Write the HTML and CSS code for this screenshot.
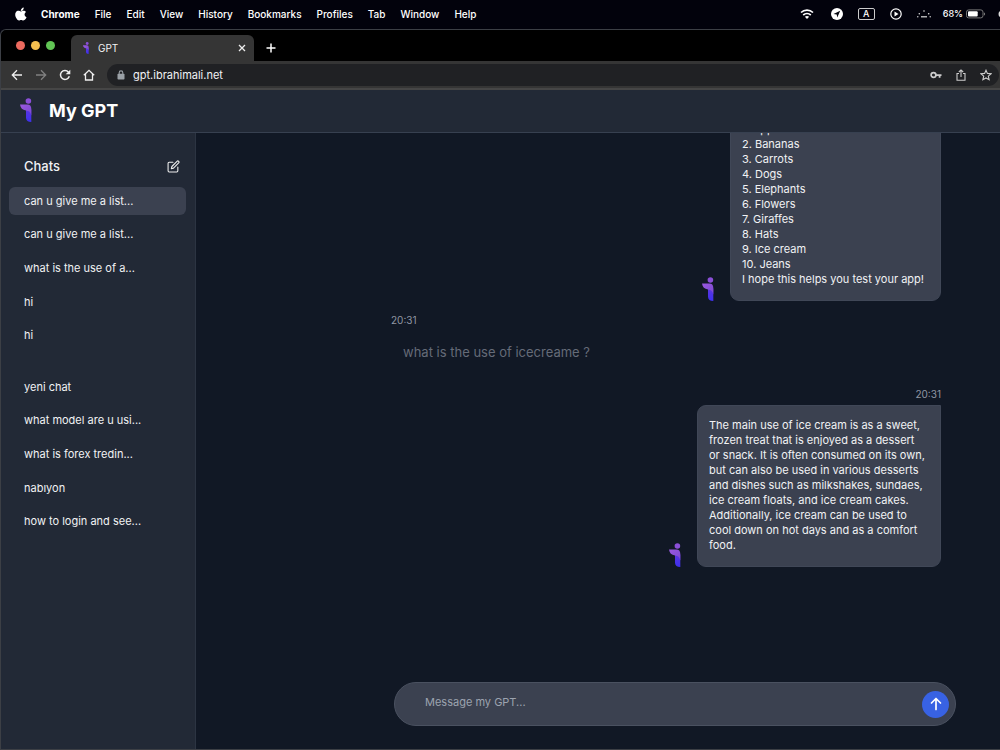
FILE: index.html
```html
<!DOCTYPE html>
<html lang="en">
<head>
    <meta charset="UTF-8">
    <meta name="viewport" content="width=device-width, initial-scale=1.0">
    <title>GPT</title>
    <link rel="stylesheet" href="styles.css">
</head>
<body>

<!-- Shared logo -->
<svg class="defs" width="0" height="0" aria-hidden="true">
    <defs>
        <linearGradient id="wing" x1="0" y1="0" x2="1" y2="1">
            <stop offset="0" stop-color="#9b59e0"/>
            <stop offset="1" stop-color="#7a48d0"/>
        </linearGradient>
        <linearGradient id="stem" x1="0" y1="0" x2="0" y2="1">
            <stop offset="0" stop-color="#5b35e0"/>
            <stop offset="1" stop-color="#3d30ee"/>
        </linearGradient>
    </defs>
    <symbol id="logo" viewBox="0 0 12 24">
        <circle cx="8.400" cy="3" r="2.800" fill="#8b4fd8"/>
        <path d="M6 11.500h5.300V24C8 24 6 22.500 6 19.500z" fill="url(#stem)"/>
        <path d="M0 6.500h7.300c2.600 0 4 1.500 4 4.200v6.800c-.6-3.200-2.300-4.800-5.300-5C2.500 12 .4 10 0 6.500z" fill="url(#wing)"/>
    </symbol>
</svg>

<div class="menubar">
    <svg class="apple" viewBox="0 0 24 24" fill="#fff"><path d="M16.700 1c.2 1.600-.4 3-1.300 4-.9 1.100-2.300 1.900-3.700 1.800-.2-1.500.5-3 1.300-4C13.900 1.800 15.400 1.100 16.700 1zM21.500 17.400c-.6 1.400-.9 2-1.700 3.200-1.100 1.600-2.500 2.500-4 2.500-1.400 0-1.900-.9-3.600-.9s-2.300.9-3.700.9c-1.500 0-2.800-1.300-3.900-2.900C1.700 16 1.300 11.200 3.200 8.800c1.100-1.500 2.700-2.300 4.300-2.300 1.700 0 2.900 1 4.500 1 1.500 0 2.400-1 4.500-1 1.500 0 3.100.8 4.200 2.200-3.700 2.100-3.200 7.300.8 8.700z"/></svg>
    <nav class="menus">
        <b>Chrome</b>
        <span>File</span>
        <span>Edit</span>
        <span>View</span>
        <span>History</span>
        <span>Bookmarks</span>
        <span>Profiles</span>
        <span>Tab</span>
        <span>Window</span>
        <span>Help</span>
    </nav>
    <div class="status">
        <svg class="wifi" width="14" height="12" viewBox="0 0 14 12" fill="none" stroke="#fff" stroke-width="1.700"><path d="M1 4.500c3.300-3.200 8.700-3.200 12 0M3.200 7c2.200-2 5.400-2 7.600 0"/><path d="M4.900 8.700c1.200-1 3-1 4.200 0L7 11z" fill="#fff" stroke="none"/></svg>
        <svg width="12" height="12" viewBox="0 0 12 12"><circle cx="6" cy="6" r="6" fill="#fff"/><path d="M9.200 2.800L2.500 5.900l3.200.5.600 3.200z" fill="#05060f"/></svg>
        <span class="key">A</span>
        <svg width="12" height="12" viewBox="0 0 12 12"><circle cx="6" cy="6" r="5.200" fill="none" stroke="#fff" stroke-width="1.200"/><path d="M4.500 3.600v4.800L8.500 6z" fill="#fff"/></svg>
        <svg width="14" height="8" viewBox="0 0 14 8" fill="#ddd"><circle cx="2.300" cy="3.800" r=".8"/><circle cx="7" cy="1" r=".8"/><circle cx="11.700" cy="3.800" r=".8"/><circle cx=".8" cy="6.800" r=".7"/><circle cx="13.200" cy="6.800" r=".7"/><path d="M4 6.200h6v1.200H4z"/></svg>
        <div class="battery">
            <span>68%</span>
            <svg width="20" height="10" viewBox="0 0 20 10"><rect x=".5" y=".9" width="16.500" height="8" rx="2.200" fill="none" stroke="#777"/><rect x="2" y="2.300" width="9.700" height="5.200" rx="1" fill="#fff"/><path d="M18 3.500c1.500.4 1.500 2.600 0 3z" fill="#777"/></svg>
        </div>
    </div>
    <svg width="2" height="8" viewBox="0 0 2 8"><circle cx="4" cy="4" r="3.500" fill="#ddd"/></svg>
</div>

<div class="window">
    <div class="tabstrip">
        <div class="lights"><i class="red"></i><i class="yellow"></i><i class="green"></i></div>
        <div class="tab">
            <svg class="favicon"><use href="#logo"/></svg>
            <span>GPT</span>
            <button type="button" aria-label="Close tab"><svg width="8" height="8" viewBox="0 0 8 8" stroke="#eee" stroke-width="1.300"><path d="M1 1l6 6M7 1L1 7"/></svg></button>
        </div>
        <button type="button" class="new-tab" aria-label="New tab"><svg width="10" height="10" viewBox="0 0 10 10" stroke="#fff" stroke-width="1.500"><path d="M5 .5v9M.5 5h9"/></svg></button>
    </div>

    <div class="toolbar">
        <button type="button" aria-label="Back"><svg width="12" height="12" viewBox="0 0 12 12" fill="none" stroke="#eee" stroke-width="1.300"><path d="M11 6H1.500M6 1.300L1.300 6 6 10.700"/></svg></button>
        <button type="button" aria-label="Forward"><svg width="12" height="12" viewBox="0 0 12 12" fill="none" stroke="#808080" stroke-width="1.300"><path d="M1 6h9.500M6 1.300L10.700 6 6 10.700"/></svg></button>
        <button type="button" aria-label="Reload"><svg width="12" height="12" viewBox="0 0 12 12" fill="none" stroke="#eee" stroke-width="1.500"><path d="M10.300 7.300A4.500 4.500 0 1 1 9.400 3"/><path d="M11.300.7v4.600H6.700z" fill="#eee" stroke="none"/></svg></button>
        <button type="button" aria-label="Home"><svg width="12" height="12" viewBox="0 0 12 12" fill="none" stroke="#eee" stroke-width="1.300"><path d="M.8 6.300L6 1.300l5.200 5M2.500 5v6h7V5"/></svg></button>
        <div class="address">
            <svg width="8" height="10" viewBox="0 0 8 10"><rect x=".5" y="3.800" width="7" height="5.700" rx=".8" fill="#9aa0a6"/><path d="M2.200 4V2.700a1.800 1.800 0 0 1 3.600 0V4" fill="none" stroke="#9aa0a6" stroke-width="1.100"/></svg>
            <input type="text" aria-label="Address" value="gpt.ibrahimali.net">
            <svg width="12" height="8" viewBox="0 0 12 8"><circle cx="3.500" cy="4" r="2.400" fill="none" stroke="#ccc" stroke-width="1.700"/><path d="M6 3.200h5.500v1.800h-1v1.700H8.700V5H6z" fill="#ccc"/></svg>
            <svg width="10" height="12" viewBox="0 0 10 12" fill="none" stroke="#ccc" stroke-width="1.100"><path d="M3 4.500H1v6.700h8V4.500H7M5 8V1M2.800 3L5 .9 7.200 3"/></svg>
            <svg width="12" height="12" viewBox="0 0 12 12" fill="none" stroke="#ccc" stroke-width="1.100"><path d="M6 1.200l1.400 3.200 3.600.4-2.700 2.400.8 3.500L6 8.900l-3.100 1.800.8-3.500L1 4.800l3.600-.4z"/></svg>
        </div>
    </div>

    <header class="app-header">
        <svg class="logo"><use href="#logo"/></svg>
        <h1>My GPT</h1>
    </header>

    <div class="app">
        <aside class="sidebar">
            <div class="sidebar-head">
                <h2>Chats</h2>
                <button type="button" aria-label="New chat"><svg width="13" height="13" viewBox="0 0 24 24" fill="none" stroke="#eee" stroke-width="2" stroke-linecap="round" stroke-linejoin="round"><path d="M11 4H4a2 2 0 0 0-2 2v14a2 2 0 0 0 2 2h14a2 2 0 0 0 2-2v-7"/><path d="M18.500 2.500a2.100 2.100 0 0 1 3 3L12 15l-4 1 1-4z"/></svg></button>
            </div>
            <ul class="chats">
                <li><a class="active" href="#">can u give me a list...</a></li>
                <li><a href="#">can u give me a list...</a></li>
                <li><a href="#">what is the use of a...</a></li>
                <li><a href="#">hi</a></li>
                <li><a href="#">hi</a></li>
            </ul>
            <ul class="chats">
                <li><a href="#">yeni chat</a></li>
                <li><a href="#">what model are u usi...</a></li>
                <li><a href="#">what is forex tredin...</a></li>
                <li><a href="#">nabıyon</a></li>
                <li><a href="#">how to login and see...</a></li>
            </ul>
        </aside>

        <main class="chat">
            <div class="messages">
                <div class="reply">
                    <svg class="avatar"><use href="#logo"/></svg>
                    <div class="bubble">1. Apples
2. Bananas
3. Carrots
4. Dogs
5. Elephants
6. Flowers
7. Giraffes
8. Hats
9. Ice cream
10. Jeans
I hope this helps you test your app!</div>
                </div>
                <div class="question">
                    <time>20:31</time>
                    <p>what is the use of icecreame ?</p>
                </div>
                <time class="reply-time">20:31</time>
                <div class="reply">
                    <svg class="avatar"><use href="#logo"/></svg>
                    <div class="bubble wide">The main use of ice cream is as a sweet,
frozen treat that is enjoyed as a dessert
or snack. It is often consumed on its own,
but can also be used in various desserts
and dishes such as milkshakes, sundaes,
ice cream floats, and ice cream cakes.
Additionally, ice cream can be used to
cool down on hot days and as a comfort
food.</div>
                </div>
            </div>
            <form class="composer">
                <input type="text" placeholder="Message my GPT..." aria-label="Message my GPT">
                <button type="button" aria-label="Send"><svg width="12" height="14" viewBox="0 0 12 14" fill="none" stroke="#fff" stroke-width="1.700" stroke-linecap="round" stroke-linejoin="round"><path d="M6 12.500v-11M1.500 6L6 1.500 10.500 6"/></svg></button>
            </form>
        </main>
    </div>
</div>

</body>
</html>
```
FILE: styles.css
```css
* {
    box-sizing: border-box;
}
body {
    margin: 0;
    height: 100vh;
    display: flex;
    flex-direction: column;
    overflow: hidden;
    background-color: #02020c;
    color: #f1f2f4;
    font-family: "Inter", "Liberation Sans", sans-serif;
    font-size: 11px;
}
button {
    display: flex;
    align-items: center;
    justify-content: center;
    padding: 0;
    border: none;
    background: none;
    cursor: pointer;
}
input {
    min-width: 0;
    flex: 1;
    padding: 0;
    border: none;
    outline: none;
    background: none;
    color: inherit;
    font: inherit;
}
svg {
    flex: none;
}
.defs {
    position: absolute;
}

/* macOS menu bar */
.menubar {
    flex: none;
    height: 29px;
    padding: 0 0 2px 14px;
    display: flex;
    align-items: center;
    font-size: 10px;
    font-weight: 500;
    color: #fff;
}
.apple {
    width: 14px;
    height: 14px;
    margin-right: 13px;
}
.menus {
    display: flex;
    gap: 15px;
}
.status {
    margin-left: auto;
    margin-right: 12px;
    display: flex;
    align-items: center;
    gap: 15px;
}
.wifi {
    margin-right: 2px;
}
.key {
    width: 17px;
    height: 12px;
    border: 1px solid #ccc;
    border-radius: 2px;
    font-size: 9px;
    line-height: 10px;
    text-align: center;
}
.battery {
    display: flex;
    align-items: center;
    gap: 3px;
    margin-left: -3px;
    font-size: 9px;
}

/* Browser window */
.window {
    flex: 1;
    min-height: 0;
    display: flex;
    flex-direction: column;
    border: solid #3c3f45;
    border-width: 1px 0 1px 1px;
    border-radius: 6px 0 0 0;
    overflow: hidden;
    background-color: #000;
}
.tabstrip {
    flex: none;
    height: 31px;
    padding: 5px 0 0 15px;
    display: flex;
}
.lights {
    display: flex;
    gap: 6px;
    margin-top: 6px;
}
.lights i {
    width: 9px;
    height: 9px;
    border-radius: 50%;
}
.red {
    background-color: #ec6a5e;
}
.yellow {
    background-color: #f4bf4f;
}
.green {
    background-color: #61c554;
}
.tab {
    width: 183px;
    margin-left: 16px;
    padding: 0 8px 0 11px;
    display: flex;
    align-items: center;
    border-radius: 6px 6px 0 0;
    background-color: #353535;
    font-size: 10px;
}
.tab button {
    margin-left: auto;
}
.favicon {
    width: 8px;
    height: 12px;
    margin-right: 8px;
}
.new-tab {
    margin-left: 12px;
}
.toolbar {
    flex: none;
    height: 29px;
    padding: 1px 1px 1px 10px;
    display: flex;
    align-items: center;
    gap: 12px;
    border-bottom: 2px solid #464646;
    background-color: #353535;
}
.address {
    flex: 1;
    height: 22px;
    padding: 0 7px 0 10px;
    display: flex;
    align-items: center;
    gap: 14px;
    border-radius: 11px;
    background-color: #202124;
}
.address input {
    margin-left: -6px;
    font-size: 11px;
}

/* App */
.app-header {
    flex: none;
    height: 43px;
    padding: 0 0 2px 19px;
    display: flex;
    align-items: center;
    gap: 17px;
    border-bottom: 1px solid #374050;
    background-color: #222936;
}
.app-header h1 {
    margin: 0;
    font-size: 18px;
    font-weight: 700;
    color: #fff;
}
.logo,
.avatar {
    width: 12px;
    height: 24px;
}
.app {
    flex: 1;
    min-height: 0;
    display: flex;
}
.sidebar {
    flex: none;
    width: 195px;
    padding: 20px 9px 0 8px;
    border-right: 1px solid #2c3442;
    background-color: #222936;
}
.sidebar-head {
    height: 26px;
    margin-bottom: 5px;
    padding: 0 6px 0 15px;
    display: flex;
    align-items: center;
    justify-content: space-between;
}
.sidebar-head h2 {
    margin: 0;
    font-size: 13px;
    font-weight: 500;
}
.chats {
    height: 168px;
    margin: 0 0 18px;
    padding: 0;
    display: grid;
    grid-template-rows: repeat(5, 1fr);
    list-style: none;
}
.chats li {
    display: flex;
    padding: 3px 0;
}
.chats a {
    flex: 1;
    display: flex;
    align-items: center;
    padding-left: 15px;
    border-radius: 6px;
    color: inherit;
    text-decoration: none;
}
.chats .active {
    background-color: #3b4150;
}
.chat {
    flex: 1;
    min-width: 0;
    padding: 0 44px 23px 195px;
    display: flex;
    flex-direction: column;
    background-color: #111825;
}
.messages {
    flex: 1;
    min-height: 0;
    padding: 0 15px 115px 0;
    display: flex;
    flex-direction: column;
    justify-content: flex-end;
    overflow: hidden;
}
.messages > * {
    flex: none;
}
.reply {
    display: flex;
    align-items: flex-end;
    justify-content: flex-end;
    gap: 16px;
}
.bubble {
    min-width: 211px;
    padding: 12px 11px 13px;
    border: 1px solid #404757;
    border-radius: 9px 0 9px 9px;
    background-color: #3b4150;
    line-height: 15px;
    white-space: pre;
}
.wide {
    width: 244px;
}
time {
    font-size: 10px;
    color: #9096a3;
    line-height: 15px;
}
.question {
    margin: 12px 0 26px;
}
.question p {
    margin: 15px 0 0 12px;
    font-size: 13px;
    line-height: 18px;
    color: #656b78;
}
.reply-time {
    margin-bottom: 3px;
    text-align: right;
}
.composer {
    flex: none;
    height: 44px;
    margin-left: 3px;
    padding: 0 6px 0 30px;
    display: flex;
    align-items: center;
    border: 1px solid #4a5160;
    border-radius: 22px;
    background-color: #3b4150;
}
.composer input {
    padding-bottom: 4px;
    font-size: 11px;
}
.composer input::placeholder {
    color: #9ca3af;
}
.composer button {
    width: 27px;
    height: 27px;
    border-radius: 50%;
    background-color: #3862e3;
}
```
